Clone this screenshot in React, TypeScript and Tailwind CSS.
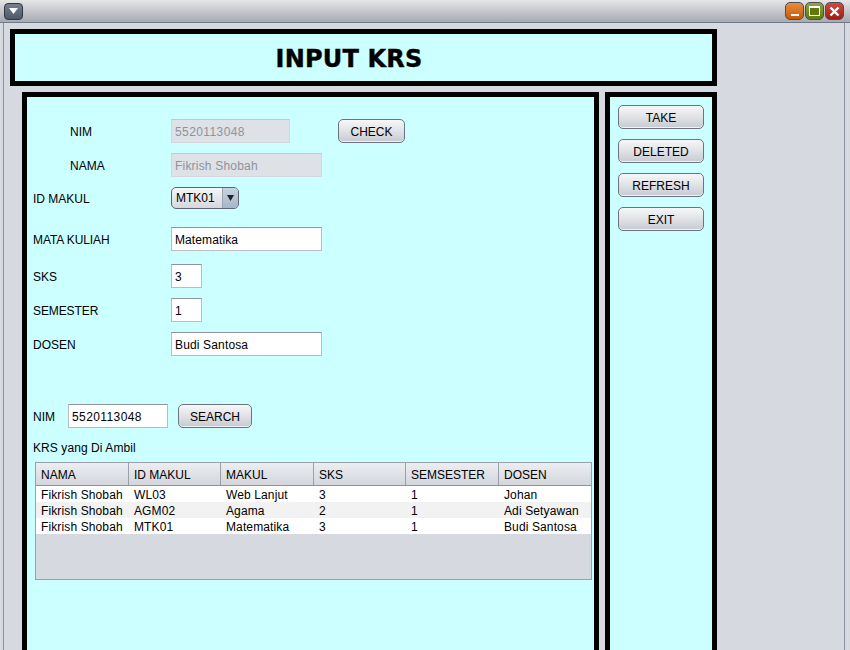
const columns = [
  { title: 'NAMA', width: 'w-[93px]' },
  { title: 'ID MAKUL', width: 'w-[92px]' },
  { title: 'MAKUL', width: 'w-[93px]' },
  { title: 'SKS', width: 'w-[92px]' },
  { title: 'SEMSESTER', width: 'w-[93px]' },
  { title: 'DOSEN', width: 'flex-1' },
]

const rows = [
  ['Fikrish Shobah', 'WL03', 'Web Lanjut', '3', '1', 'Johan'],
  ['Fikrish Shobah', 'AGM02', 'Agama', '2', '1', 'Adi Setyawan'],
  ['Fikrish Shobah', 'MTK01', 'Matematika', '3', '1', 'Budi Santosa'],
]

function JButton({ label, className }: { label: string; className: string }) {
  return (
    <button className={`h-6 rounded-[5px] border border-[#6d7480] bg-gradient-to-b from-[#f6f7f8] via-[#e0e2e6] to-[#c6cad1] pt-px text-xs leading-none text-black shadow-[inset_0_-1px_0_#f0f2f5] ${className}`}>
      {label}
    </button>
  )
}

function Field({ value, className, disabled }: { value: string; className: string; disabled?: boolean }) {
  return (
    <div
      className={`flex h-6 items-center border px-[3px] pt-px text-xs ${
        disabled
          ? 'border-[#d3d6dc] border-t-[#c3c7ce] bg-[#dee1e6] text-[#8f939b]'
          : 'border-[#b8bcc3] border-t-[#8f949c] bg-white text-black'
      } ${className}`}
    >
      {value}
    </div>
  )
}

function Label({ text, className }: { text: string; className: string }) {
  return <span className={`pt-px text-xs text-black ${className}`}>{text}</span>
}

function WindowButton({ color, children }: { color: string; children: React.ReactNode }) {
  return (
    <div className={`flex h-[18px] w-[19px] items-center justify-center rounded-[5px] border border-[#4a4f55] ${color}`}>
      {children}
    </div>
  )
}

export default function App() {
  return (
    <div className="flex h-[650px] w-[850px] flex-col overflow-hidden bg-[#d6d9e0] font-['Liberation_Sans',Arial,sans-serif]">
      {/* title bar */}
      <div className="flex h-[23px] shrink-0 items-center justify-between border-b border-[#6f7a88] bg-gradient-to-b from-[#e6e6e8] to-[#a7aab3] pl-1 pr-[6px]">
        <div className="flex h-[17px] w-[19px] items-center justify-center rounded-[4px] border border-[#33383f] bg-gradient-to-b from-[#77808f] to-[#4f5866]">
          <svg width="9" height="6" viewBox="0 0 9 6">
            <path d="M0 0h9L4.5 6z" fill="#fff" />
          </svg>
        </div>
        <div className="flex gap-[1px]">
          <WindowButton color="bg-gradient-to-b from-[#e98d3a] to-[#c25a05]">
            <div className="mt-[7px] h-[2px] w-[8px] bg-white" />
          </WindowButton>
          <WindowButton color="bg-gradient-to-b from-[#8fa544] to-[#5f7a0c]">
            <div className="h-[10px] w-[11px] border border-t-2 border-white bg-[#5f7a0c]" />
          </WindowButton>
          <WindowButton color="bg-gradient-to-b from-[#cf4b3e] to-[#a01d14]">
            <svg width="11" height="11" viewBox="0 0 11 11">
              <path d="M1.5 1.5l8 8M9.5 1.5l-8 8" stroke="#fff" strokeWidth="2.4" />
            </svg>
          </WindowButton>
        </div>
      </div>

      {/* frame body */}
      <div className="mx-[3px] mr-[5px] flex min-h-0 flex-1 flex-col border-x border-[#8a919c] pl-[6px] pt-[6px]">
        <div className="flex h-[57px] w-[707px] shrink-0 items-center justify-center border-[5px] border-black bg-[#ccffff] pr-[29px] pt-[2px]">
          <h1 className="font-['DejaVu_Sans',sans-serif] text-2xl font-bold tracking-[0.2px] text-black [-webkit-text-stroke:0.4px_#000]">INPUT KRS</h1>
        </div>

        <div className="ml-3 mt-[6px] flex min-h-0 flex-1 gap-[6px]">
          {/* form panel */}
          <div className="w-[577px] border-x-[5px] border-t-[5px] border-black bg-[#ccffff] pl-[6px] pt-[22px]">
            <div className="flex h-6 items-center">
              <Label text="NIM" className="ml-[37px] w-[101px]" />
              <Field value="5520113048" className="w-[119px] tracking-[0.4px]" disabled />
              <JButton label="CHECK" className="ml-[48px] w-[67px]" />
            </div>
            <div className="mt-[10px] flex h-6 items-center">
              <Label text="NAMA" className="ml-[37px] w-[101px]" />
              <Field value="Fikrish Shobah" className="w-[151px] tracking-[0.2px]" disabled />
            </div>
            <div className="mt-[10px] flex h-[22px] items-center">
              <Label text="ID MAKUL" className="w-[138px]" />
              <div className="flex h-[22px] w-[68px] overflow-hidden rounded-[5px] border border-[#5e6672] bg-gradient-to-b from-[#f5f6f8] to-[#d4d8de]">
                <span className="flex flex-1 items-center pl-1 text-xs text-black">MTK01</span>
                <span className="flex w-4 items-center justify-center border-l border-[#9aa6b5] bg-gradient-to-b from-[#c6d3e0] to-[#a5b7c9]">
                  <svg width="7" height="6" viewBox="0 0 7 6">
                    <path d="M0 0h7L3.5 6z" fill="#222" />
                  </svg>
                </span>
              </div>
            </div>
            <div className="mt-[18px] flex h-6 items-center">
              <Label text="MATA KULIAH" className="w-[138px] tracking-[-0.1px]" />
              <Field value="Matematika" className="w-[151px] tracking-[0.1px]" />
            </div>
            <div className="mt-[13px] flex h-6 items-center">
              <Label text="SKS" className="w-[138px]" />
              <Field value="3" className="w-[31px]" />
            </div>
            <div className="mt-[10px] flex h-6 items-center">
              <Label text="SEMESTER" className="w-[138px] tracking-[-0.1px]" />
              <Field value="1" className="w-[31px]" />
            </div>
            <div className="mt-[10px] flex h-6 items-center">
              <Label text="DOSEN" className="w-[138px]" />
              <Field value="Budi Santosa" className="w-[151px] tracking-[0.15px]" />
            </div>
            <div className="mt-[48px] flex h-6 items-center">
              <Label text="NIM" className="w-[35px]" />
              <Field value="5520113048" className="w-[100px] tracking-[0.4px]" />
              <JButton label="SEARCH" className="ml-[10px] w-[74px]" />
            </div>
            <div className="mt-[12px] pt-px text-xs leading-[14px] tracking-[0.08px] text-black">KRS yang Di Ambil</div>

            {/* table */}
            <div className="ml-[2px] mt-[7px] flex h-[118px] w-[557px] flex-col border border-[#9aa0a8] bg-[#d6d9e0]">
              <div className="flex h-[23px] shrink-0 border-b border-[#8d939c] bg-gradient-to-b from-[#eceef1] to-[#d3d6dc]">
                {columns.map((col) => (
                  <div key={col.title} className={`flex items-center border-r border-[#9aa0a8] pl-[5px] pt-px text-xs text-black last:border-r-0 ${col.width}`}>
                    {col.title}
                  </div>
                ))}
              </div>
              {rows.map((row, i) => (
                <div key={row[1]} className={`flex h-4 shrink-0 items-center pt-px ${i === 1 ? 'bg-[#f2f2f2]' : 'bg-white'}`}>
                  {row.map((cell, j) => (
                    <div key={j} className={`whitespace-nowrap pl-[5px] text-xs tracking-[0.12px] text-black ${columns[j].width}`}>
                      {cell}
                    </div>
                  ))}
                </div>
              ))}
            </div>
          </div>

          {/* action panel */}
          <div className="flex w-[112px] flex-col gap-[10px] border-x-[5px] border-t-[5px] border-black bg-[#ccffff] pl-2 pt-[8px]">
            <JButton label="TAKE" className="w-[86px]" />
            <JButton label="DELETED" className="w-[86px]" />
            <JButton label="REFRESH" className="w-[86px]" />
            <JButton label="EXIT" className="w-[86px]" />
          </div>
        </div>
      </div>
    </div>
  )
}
